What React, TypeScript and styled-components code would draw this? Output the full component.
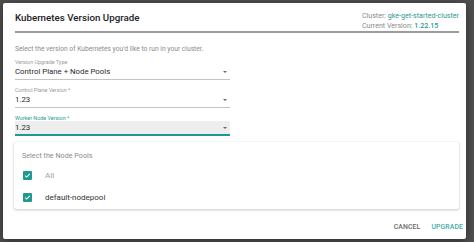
import React from "react";
import styled, { createGlobalStyle } from "styled-components";

const TEAL = "#1f9a8f";

const Global = createGlobalStyle`
  html, body { margin: 0; padding: 0; }
  body { background: #4e4e4e; font-family: Roboto, "Noto Sans", sans-serif; }
  * { box-sizing: border-box; }
`;

const Backdrop = styled.div`
  width: 474px;
  height: 242px;
  padding: 3px 8px 3px 3px;
  background: #4e4e4e;
`;

const Dialog = styled.div`
  height: 236px;
  background: #fff;
  border-radius: 2px;
  display: flex;
  flex-direction: column;
  box-shadow: 0 2px 8px rgba(0, 0, 0, 0.4);
`;

const Header = styled.div`
  height: 30px;
  margin: 0 7px 0 12px;
  display: flex;
  justify-content: space-between;
  align-items: flex-start;
  padding-top: 5px;
  border-bottom: 2px solid #9c9c9c;
`;

const Title = styled.h1`
  margin: 0;
  font-size: 9.75px;
  line-height: 20px;
  font-weight: 500;
  color: #222;
`;

const Meta = styled.div`
  padding-top: 3px;
  font-size: 7.1px;
  line-height: 10px;
  color: #8a8a8a;
`;

const MetaValue = styled.span<{ $strong?: boolean }>`
  color: ${TEAL};
  font-weight: ${(p) => (p.$strong ? 500 : 400)};
`;

const Body = styled.div`
  padding: 0 7px 0 12px;
`;

const Intro = styled.p`
  margin: 11px 0 4px;
  font-size: 6.7px;
  line-height: 10px;
  color: #8c8c8c;
`;

const Field = styled.div`
  width: 215px;
  margin-bottom: 6px;
`;

const FieldLabel = styled.div<{ $focused?: boolean }>`
  font-size: 5.4px;
  line-height: 8px;
  color: ${(p) => (p.$focused ? TEAL : "#9a9a9a")};
`;

const SelectBox = styled.div<{ $focused?: boolean }>`
  height: ${(p) => (p.$focused ? 15 : 14)}px;
  display: flex;
  align-items: center;
  justify-content: space-between;
  padding: ${(p) => (p.$focused ? "1px 0 1px 0" : "0 0 1px 0")};
  margin-top: ${(p) => (p.$focused ? -1 : 0)}px;
  font-size: 7.8px;
  line-height: 12px;
  color: #2a2a2a;
  background: ${(p) => (p.$focused ? "#eeeeee" : "transparent")};
  border-bottom: ${(p) => (p.$focused ? `2px solid ${TEAL}` : "1px solid #c4c4c4")};
`;

const Caret = styled.span`
  width: 0;
  height: 0;
  margin-right: 3px;
  border-left: 2.5px solid transparent;
  border-right: 2.5px solid transparent;
  border-top: 2.5px solid #666;
`;

const Card = styled.div`
  width: 445px;
  height: 67px;
  margin: 1px 0 0 -1px;
  padding: 9px 8px 1px;
  border-radius: 2px;
  background: #fff;
  box-shadow: 0 1px 3px rgba(0, 0, 0, 0.2), 0 0 1px rgba(0, 0, 0, 0.15);
`;

const CardTitle = styled.div`
  margin-bottom: 3px;
  font-size: 7.2px;
  line-height: 10px;
  color: #8c8c8c;
`;

const CheckRow = styled.div`
  height: 22px;
  display: flex;
  align-items: center;
  gap: 13px;
  padding-left: 1px;
`;

const CheckBox = styled.span`
  width: 9px;
  height: 9px;
  border-radius: 1px;
  background: ${TEAL};
  display: flex;
  align-items: center;
  justify-content: center;
`;

const CheckLabel = styled.span<{ $muted?: boolean }>`
  font-size: 8px;
  color: ${(p) => (p.$muted ? "#a0a0a0" : "#333")};
`;

const Footer = styled.div`
  flex: 1;
  display: flex;
  justify-content: flex-end;
  align-items: center;
  gap: 5px;
  padding: 5px 0 0 0;
`;

const Button = styled.button<{ $primary?: boolean }>`
  border: 0;
  background: transparent;
  padding: 0 3px;
  font-family: Roboto, sans-serif;
  font-size: 6.9px;
  font-weight: 500;
  letter-spacing: 0.1px;
  text-transform: uppercase;
  color: ${(p) => (p.$primary ? "#45aba1" : "#6a6a6a")};
`;

const Check = () => (
  <svg width="7" height="7" viewBox="0 0 24 24">
    <path d="M4 12.5l5 5L20 6.5" fill="none" stroke="#fff" strokeWidth="3.5" />
  </svg>
);

export default function App() {
  return (
    <>
      <Global />
      <Backdrop>
        <Dialog>
          <Header>
            <Title>Kubernetes Version Upgrade</Title>
            <Meta>
              <div>
                Cluster: <MetaValue>gke-get-started-cluster</MetaValue>
              </div>
              <div>
                Current Version: <MetaValue $strong>1.22.15</MetaValue>
              </div>
            </Meta>
          </Header>
          <Body>
            <Intro>Select the version of Kubernetes you'd like to run in your cluster.</Intro>
            <Field>
              <FieldLabel>Version Upgrade Type</FieldLabel>
              <SelectBox>
                Control Plane + Node Pools
                <Caret />
              </SelectBox>
            </Field>
            <Field>
              <FieldLabel>Control Plane Version *</FieldLabel>
              <SelectBox>
                1.23
                <Caret />
              </SelectBox>
            </Field>
            <Field>
              <FieldLabel $focused>Worker Node Version *</FieldLabel>
              <SelectBox $focused>
                1.23
                <Caret />
              </SelectBox>
            </Field>
            <Card>
              <CardTitle>Select the Node Pools</CardTitle>
              <CheckRow>
                <CheckBox>
                  <Check />
                </CheckBox>
                <CheckLabel $muted>All</CheckLabel>
              </CheckRow>
              <CheckRow>
                <CheckBox>
                  <Check />
                </CheckBox>
                <CheckLabel>default-nodepool</CheckLabel>
              </CheckRow>
            </Card>
          </Body>
          <Footer>
            <Button>Cancel</Button>
            <Button $primary>Upgrade</Button>
          </Footer>
        </Dialog>
      </Backdrop>
    </>
  );
}
